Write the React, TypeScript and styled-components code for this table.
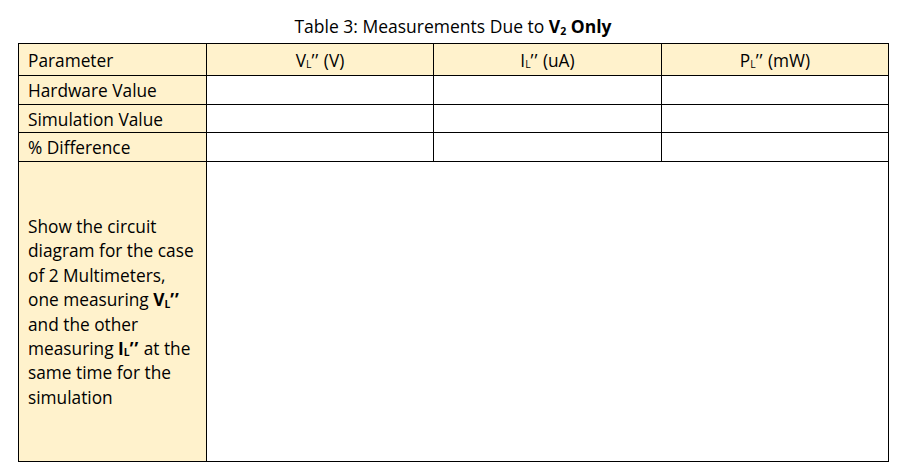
import React from "react";
import styled, { createGlobalStyle } from "styled-components";

const Global = createGlobalStyle`
  html, body { margin: 0; padding: 0; background: #fff; }
  body { font-family: "Open Sans", "Noto Sans", sans-serif; color: #000; }
`;

const Page = styled.div`
  width: 922px;
  height: 475px;
  padding: 14px 0 0 18px;
  box-sizing: border-box;
`;

const Caption = styled.div`
  width: 870px;
  text-align: center;
  font-size: 17.5px;
  line-height: 24px;
  height: 29px;
`;

const Table = styled.table`
  border-collapse: collapse;
  table-layout: fixed;
  width: 870px;
  font-size: 17.3px;
`;

const Cell = styled.td<{ $head?: boolean; $center?: boolean; $h: number }>`
  border: 1px solid #000;
  height: ${(p) => p.$h}px;
  padding: 2px 0 0 ${(p) => (p.$center ? 0 : 9)}px;
  box-sizing: border-box;
  background: ${(p) => (p.$head ? "#fff2cc" : "#fff")};
  text-align: ${(p) => (p.$center ? "center" : "left")};
  vertical-align: middle;
  line-height: 22px;
  white-space: nowrap;
`;

const Prompt = styled.div`
  line-height: 24.4px;
  padding-top: 0;
`;

const Sub = styled.sub`
  font-size: 0.6em;
  line-height: 0;
  vertical-align: baseline;
  position: relative;
  top: 0.15em;
`;

const Quote = styled.span`
  letter-spacing: 1px;
`;

const Sup = (letter: string) => (
  <>
    {letter}
    <Sub>L</Sub>
    <Quote>’’</Quote>
  </>
);

const rows = [
  { label: "Hardware Value", h: 29 },
  { label: "Simulation Value", h: 28 },
  { label: "% Difference", h: 29 },
];

export default function App() {
  return (
    <Page>
      <Global />
      <Caption>
        Table 3: Measurements Due to{" "}
        <b>
          V<Sub>2</Sub> Only
        </b>
      </Caption>
      <Table>
        <colgroup>
          <col style={{ width: 188 }} />
          <col style={{ width: 227 }} />
          <col style={{ width: 228 }} />
          <col style={{ width: 227 }} />
        </colgroup>
        <tbody>
          <tr>
            <Cell $head $h={32}>Parameter</Cell>
            <Cell $head $center $h={32}>{Sup("V")} (V)</Cell>
            <Cell $head $center $h={32}>{Sup("I")} (uA)</Cell>
            <Cell $head $center $h={32}>{Sup("P")} (mW)</Cell>
          </tr>
          {rows.map((r) => (
            <tr key={r.label}>
              <Cell $head $h={r.h}>{r.label}</Cell>
              <Cell $h={r.h} />
              <Cell $h={r.h} />
              <Cell $h={r.h} />
            </tr>
          ))}
          <tr>
            <Cell $head $h={300}>
              <Prompt>
                Show the circuit
                <br />
                diagram for the case
                <br />
                of 2 Multimeters,
                <br />
                one measuring <b>{Sup("V")}</b>
                <br />
                and the other
                <br />
                measuring <b>{Sup("I")}</b> at the
                <br />
                same time for the
                <br />
                simulation
              </Prompt>
            </Cell>
            <Cell colSpan={3} $h={300} />
          </tr>
        </tbody>
      </Table>
    </Page>
  );
}
